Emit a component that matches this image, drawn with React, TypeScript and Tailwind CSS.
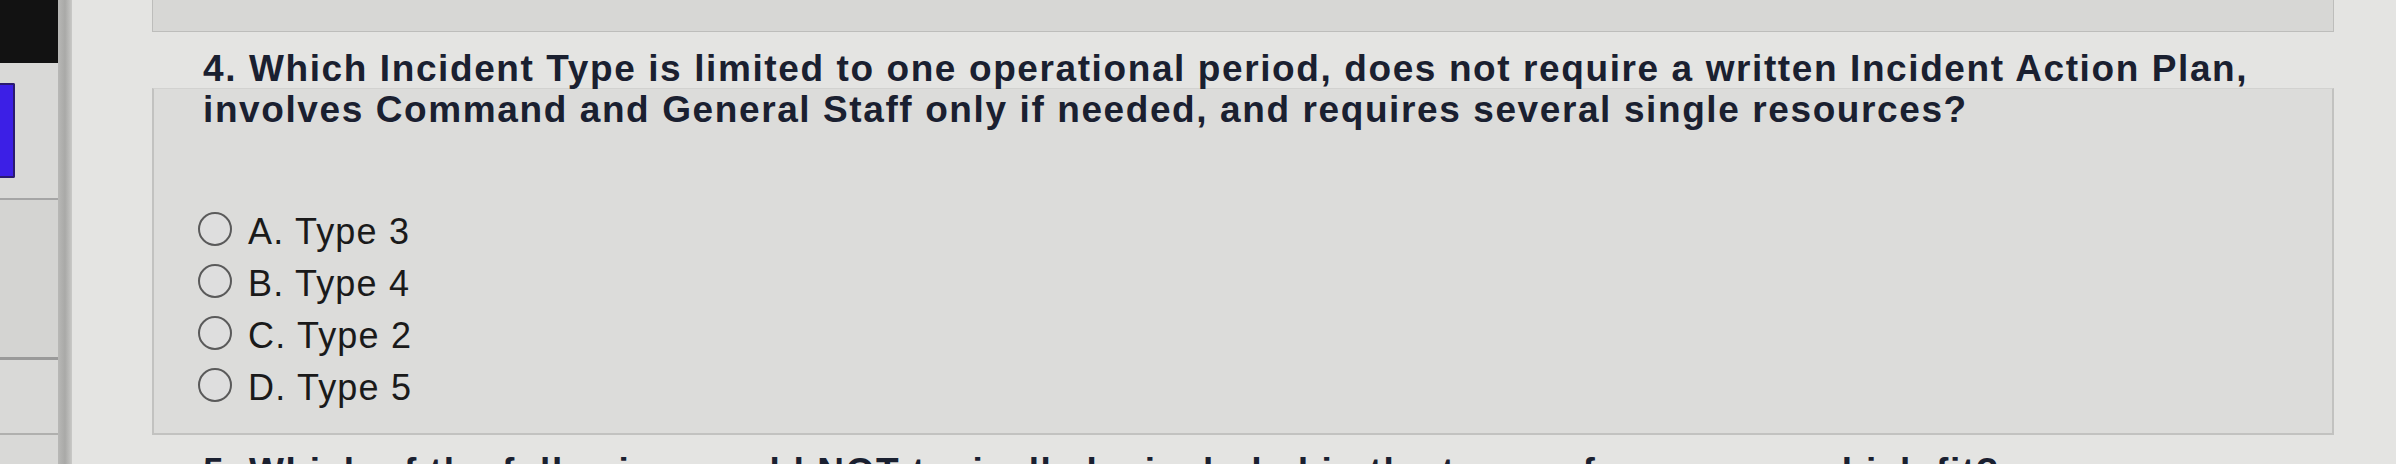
const options = ["A. Type 3", "B. Type 4", "C. Type 2", "D. Type 5"];

const Sidebar = () => {
    return (
        <div className="flex h-full shrink-0">
            <div className="w-[58px] h-full flex flex-col bg-[#d9d9d7]">
                <div className="h-[63px] bg-[#121212]" />
                <div className="h-[137px] pt-[20px] border-b-2 border-[#a5a5a5]">
                    <div className="w-[15px] h-[95px] bg-[#3c1fe6] border-2 border-l-0 border-[#2a1a70] rounded-r-[2px]" />
                </div>
                <div className="h-[160px] bg-[#d4d4d2] border-b-[3px] border-[#9a9a9a]" />
                <div className="h-[75px] border-b-2 border-[#b0b0ae]" />
                <div className="flex-1" />
            </div>
            <div className="w-[14px] h-full bg-gradient-to-r from-[#b8b8b6] via-[#a9a9a7] to-[#c9c9c7]" />
        </div>
    );
};

const Radio = ({ label }: { label: string }) => {
    return (
        <label className="flex items-start h-[52px] gap-[16px] cursor-pointer">
            <span className="mt-[6px] w-[34px] h-[34px] rounded-full border-2 border-[#5a5a5a] bg-[#dedede] shrink-0" />
            <span className="text-[36px] leading-[52px] text-[#1a1a1a] tracking-[1.2px]">{label}</span>
        </label>
    );
};

export default function App() {
    return (
        <div className="w-[2396px] h-[464px] overflow-hidden flex bg-[#e4e4e2] font-['Liberation_Sans',Arial,sans-serif]">
            <Sidebar />
            <div className="flex-1 flex flex-col pl-[80px]">
                <div className="w-[2182px] h-[32px] shrink-0 bg-[#d7d7d5] border border-t-0 border-[#bdbdbb]" />
                <div className="mt-[16px] pl-[51px] relative z-10 text-[37px] leading-[41px] font-bold text-[#1a2030] tracking-[1.6px] whitespace-nowrap">
                    <p>4. Which Incident Type is limited to one operational period, does not require a written Incident Action Plan,</p>
                    <p>involves Command and General Staff only if needed, and requires several single resources?</p>
                </div>
                <div className="-mt-[42px] w-[2182px] h-[347px] shrink-0 bg-[#dcdcda] border-2 border-t border-[#c2c2c0] border-t-[#d2d2d0] pl-[44px] pt-[117px]">
                    {options.map((o) => (
                        <Radio key={o} label={o} />
                    ))}
                </div>
                <div className="mt-[16px] pl-[51px] text-[37px] leading-[41px] font-bold text-[#1a2030] tracking-[1.6px] whitespace-nowrap">
                    5. Which of the following would NOT typically be included in the types of resources which fit?
                </div>
            </div>
        </div>
    );
}
